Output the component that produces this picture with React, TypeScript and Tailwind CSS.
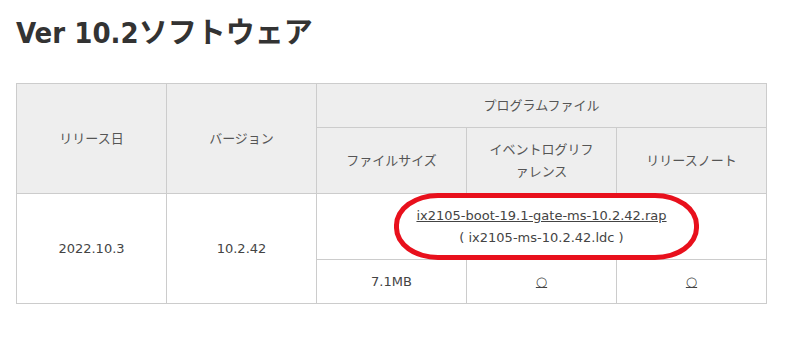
import React from 'react';

const font = { fontFamily: '"DejaVu Sans", "Noto Sans CJK JP", sans-serif' };

const App: React.FC = () => {
  const th = 'border border-[#cccccc] bg-[#eeeeee] font-normal text-[#555] text-center align-middle px-5 py-[10.5px] leading-[22px]';
  const td = 'border border-[#cccccc] bg-white text-[#444] text-center align-middle px-5 py-[10.5px] leading-[22px]';

  return (
    <div className="w-[800px] h-[340px] bg-white text-[#333] px-4 pt-[13px]" style={font}>
      <h1
        className="text-[29px] font-bold leading-[40px] text-[#333] m-0"
        style={{ fontFamily: '"DejaVu Sans Condensed", "DejaVu Sans", "Noto Sans CJK JP", sans-serif' }}
      >
        Ver 10.2ソフトウェア
      </h1>

      <div className="relative mt-[30px] w-[750px]">
        <table className="w-[750px] border-collapse table-fixed text-[13px]">
          <colgroup>
            <col className="w-[150px]" />
            <col className="w-[150px]" />
            <col className="w-[150px]" />
            <col className="w-[150px]" />
            <col className="w-[150px]" />
          </colgroup>
          <thead>
            <tr>
              <th rowSpan={2} className={th}>リリース日</th>
              <th rowSpan={2} className={th}>バージョン</th>
              <th colSpan={3} className={th}>プログラムファイル</th>
            </tr>
            <tr>
              <th className={th}>ファイルサイズ</th>
              <th className={th}>イベントログリファレンス</th>
              <th className={th}>リリースノート</th>
            </tr>
          </thead>
          <tbody>
            <tr>
              <td rowSpan={2} className={td}>2022.10.3</td>
              <td rowSpan={2} className={td}>10.2.42</td>
              <td colSpan={3} className={td}>
                <a href="#" className="underline text-[#444]">ix2105-boot-19.1-gate-ms-10.2.42.rap</a>
                <br />
                ( ix2105-ms-10.2.42.ldc )
              </td>
            </tr>
            <tr>
              <td className={td}>7.1MB</td>
              <td className={td}><a href="#" className="underline text-[#444]">○</a></td>
              <td className={td}><a href="#" className="underline text-[#444]">○</a></td>
            </tr>
          </tbody>
        </table>

        {/* hand-drawn highlight */}
        <div className="absolute left-[378px] top-[110px] w-[305px] h-[67px] border-[5px] border-[#e8101c] rounded-[44px/32px] pointer-events-none" />
      </div>
    </div>
  );
};

export default App;
